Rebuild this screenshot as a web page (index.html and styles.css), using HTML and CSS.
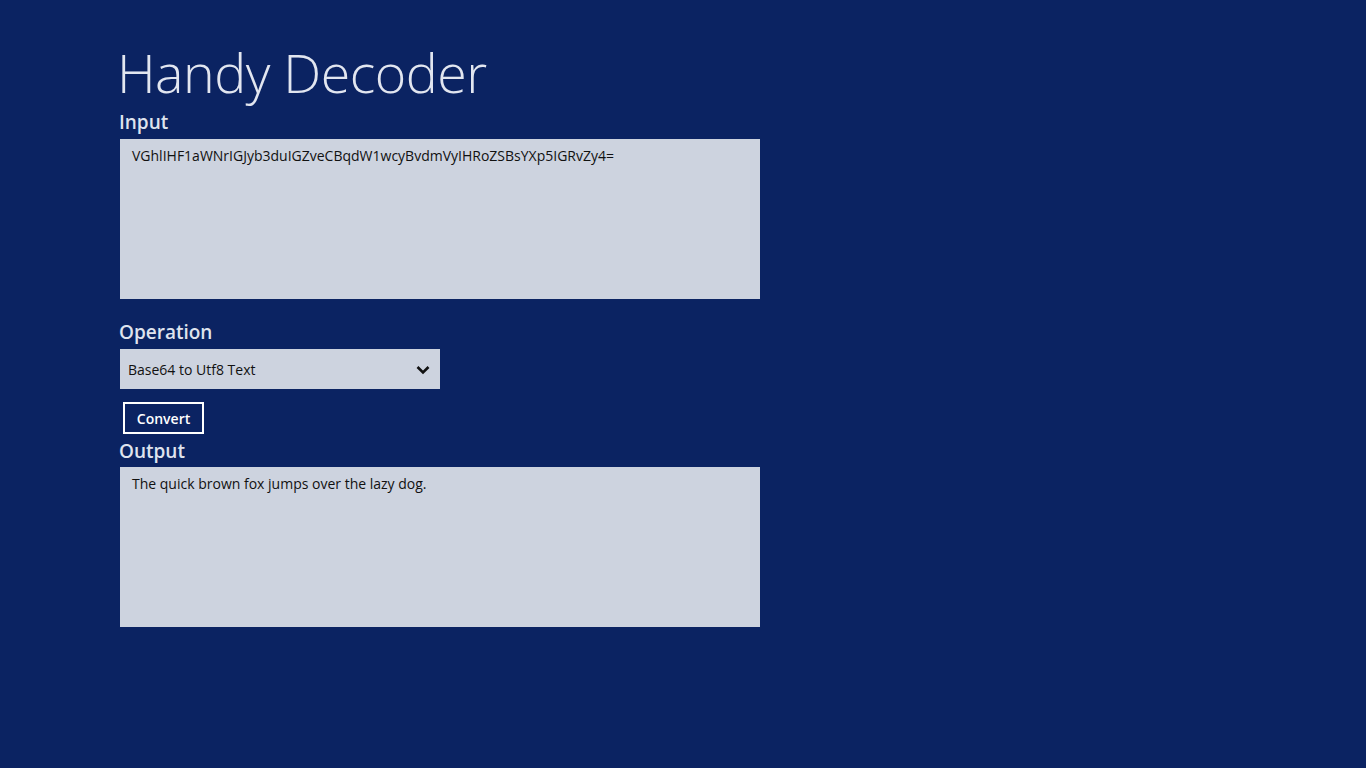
FILE: index.html
```html
<!DOCTYPE html>
<html>
<head>
<meta charset="utf-8">
<link rel="stylesheet" href="styles.css">
</head>
<body>
<main class="app">
  <h1 class="title">Handy Decoder</h1>
  <label class="label label-input">Input</label>
  <div class="textbox textbox-in">VGhlIHF1aWNrIGJyb3duIGZveCBqdW1wcyBvdmVyIHRoZSBsYXp5IGRvZy4=</div>
  <label class="label label-op">Operation</label>
  <div class="select">
    <span class="select-text">Base64 to Utf8 Text</span>
    <svg class="chevron" width="14" height="10" viewBox="0 0 14 10"><path d="M1.5 2 L7 7.5 L12.5 2" fill="none" stroke="#111" stroke-width="2.6"/></svg>
  </div>
  <button class="convert">Convert</button>
  <label class="label label-out">Output</label>
  <div class="textbox textbox-out">The quick brown fox jumps over the lazy dog.</div>
</main>
</body>
</html>
```
FILE: styles.css
```css
html, body {
  margin: 0;
  padding: 0;
  background: #0b2362;
  height: 100%;
}
.app {
  display: flex;
  flex-direction: column;
  align-items: flex-start;
  padding-left: 120px;
  font-family: "Open Sans", "Noto Sans", sans-serif;
}
.title {
  margin: 35px 0 0 -3px;
  font-weight: 300;
  font-size: 53.7px;
  line-height: 75px;
  color: #e2e6f0;
  letter-spacing: -0.5px;
}
.label {
  color: #dfe3ee;
  font-weight: 600;
  font-size: 19px;
  line-height: 24px;
  margin-left: -1px;
}
.label-input { margin-top: 0; }
.label-op { margin-top: 21px; }
.label-out { margin-top: 5px; }
.textbox {
  width: 640px;
  height: 160px;
  box-sizing: border-box;
  background: #cdd3df;
  color: #111;
  font-size: 14px;
  padding: 7px 12px;
  line-height: 20px;
}
.textbox-in { margin-top: 5px; }
.textbox-out { margin-top: 4px; }
.select {
  margin-top: 5px;
  width: 320px;
  height: 40px;
  box-sizing: border-box;
  background: #cdd3df;
  display: flex;
  align-items: center;
  justify-content: space-between;
  padding: 0 10px 0 8px;
  color: #111;
  font-size: 14px;
}
.chevron { margin-top: 2px; }
.convert {
  margin: 13px 0 0 3px;
  width: 81px;
  height: 32px;
  background: transparent;
  border: 2px solid #ffffff;
  color: #ffffff;
  font-family: "Open Sans", "Noto Sans", sans-serif;
  font-weight: 600;
  font-size: 14px;
  padding: 0;
}
```
